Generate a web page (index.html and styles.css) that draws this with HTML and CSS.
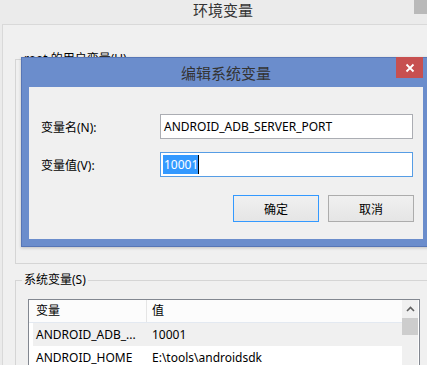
FILE: index.html
```html
<!DOCTYPE html>
<html lang="zh-CN">
<head>
  <meta charset="UTF-8">
  <title>环境变量</title>
  <link rel="stylesheet" href="styles.css">
</head>
<body>
  <div class="window">
    <div class="win-titlebar">
      <span class="win-title">环境变量</span>
      <span class="win-close"></span>
    </div>

    <div class="client">
      <fieldset class="group">
        <legend>root 的用户变量(U)</legend>
        <div class="group-user-body"></div>
      </fieldset>

      <fieldset class="group group-system">
        <legend>系统变量(S)</legend>
        <div class="listbox">
          <div class="list-main">
            <div class="list-header">
              <span class="col col-name">变量</span>
              <span class="col col-value">值</span>
            </div>
            <div class="list-row selected">
              <span class="col col-name">ANDROID_ADB_...</span>
              <span class="col col-value">10001</span>
            </div>
            <div class="list-row">
              <span class="col col-name">ANDROID_HOME</span>
              <span class="col col-value">E:\tools\androidsdk</span>
            </div>
          </div>
          <div class="scrollbar">
            <div class="scroll-up">
              <svg width="9" height="6" viewBox="0 0 9 6"><path d="M1 5 L4.5 1.5 L8 5" fill="none" stroke="#606060" stroke-width="1.6"/></svg>
            </div>
            <div class="scroll-thumb"></div>
          </div>
        </div>
      </fieldset>
    </div>

    <!-- edit dialog over the main window -->
    <div class="dialog">
      <div class="dialog-title">编辑系统变量</div>
      <div class="dialog-close">
        <svg width="10" height="10" viewBox="0 0 10 10"><path d="M1.5 1.5 L8.5 8.5 M8.5 1.5 L1.5 8.5" stroke="#fff" stroke-width="1.8"/></svg>
      </div>
      <div class="dialog-body">
        <div class="field">
          <span class="field-label">变量名(N):</span>
          <div class="field-input">ANDROID_ADB_SERVER_PORT</div>
        </div>
        <div class="field">
          <span class="field-label">变量值(V):</span>
          <div class="field-input focused"><span class="selection">10001</span><span class="caret"></span></div>
        </div>
        <div class="buttons">
          <div class="btn default">确定</div>
          <div class="btn">取消</div>
        </div>
      </div>
    </div>
  </div>
</body>
</html>
```

FILE: styles.css
```css
* {
  box-sizing: border-box;
}
html, body {
  margin: 0;
  padding: 0;
}
body {
  width: 427px;
  height: 365px;
  overflow: hidden;
  font-family: "Noto Sans", "Noto Sans CJK SC", sans-serif;
  font-size: 12px;
  color: #000;
}
.window {
  position: relative;
  width: 446px;
  height: 365px;
  background: #ebebeb;
  overflow: hidden;
}
.win-titlebar {
  height: 24px;
  display: flex;
  justify-content: center;
}
.win-title {
  font-family: "Noto Sans CJK SC", sans-serif;
  font-size: 15px;
  line-height: 20px;
  color: #333;
}
.win-close {
  position: absolute;
  left: 414px;
  top: 0;
  width: 32px;
  height: 14px;
  background: #b9b9b9;
}
.client {
  margin-left: 2px;
  height: 341px;
  border-top: 1px solid #d9d9d9;
  border-left: 1px solid #d9d9d9;
  background: #f0f0f0;
  padding: 26px 0 0 12px;
}
.group {
  margin: 0;
  padding: 0;
  min-width: 0;
  border: 1px solid #d5d5d5;
}
.group legend {
  margin-left: 6px;
  padding: 0 2px;
  line-height: 16px;
}
.group-user-body {
  height: 196px;
}
.group-system {
  margin-top: 8px;
}
.listbox {
  display: flex;
  width: 392px;
  height: 80px;
  margin: 11px 0 0 12px;
  border: 1px solid #828790;
  background: #fff;
}
.list-main {
  flex: 1;
}
.list-header {
  display: flex;
  height: 23px;
  line-height: 22px;
  background: #fcfcfc;
  border-bottom: 1px solid #e3e9f1;
}
.list-header .col-name {
  width: 118px;
  padding-left: 7px;
  border-right: 1px solid #e5e5e5;
}
.col-value {
  padding-left: 5px;
}
.list-row {
  display: flex;
  height: 23px;
  line-height: 23px;
  margin-left: 4px;
}
.list-row .col-name {
  width: 114px;
  padding-left: 3px;
}
.list-row.selected {
  background: #f0f0f0;
}
.scrollbar {
  width: 16px;
  margin-right: 1px;
  background: #f0f0f0;
}
.scroll-up {
  height: 18px;
  display: flex;
  align-items: center;
  justify-content: center;
}
.scroll-thumb {
  height: 17px;
  background: #cdcdcd;
}
.dialog {
  position: absolute;
  left: 21px;
  top: 57px;
  width: 410px;
  padding: 0 7px 7px 7px;
  background: #6b8dcc;
  border: 1px solid #5776b6;
  box-shadow: 0 1px 3px rgba(0,0,0,0.2);
}
.dialog-title {
  height: 29px;
  display: flex;
  align-items: center;
  justify-content: center;
  font-family: "Noto Sans CJK SC", sans-serif;
  font-size: 15px;
  color: #333;
}
.dialog-close {
  position: absolute;
  top: -1px;
  right: 7px;
  width: 27px;
  height: 21px;
  background: #c75050;
  display: flex;
  align-items: center;
  justify-content: center;
}
.dialog-body {
  height: 152px;
  padding: 27px 10px 0 12px;
  background: #f0f0f0;
}
.field {
  display: flex;
  align-items: center;
  height: 25px;
}
.field + .field {
  margin-top: 13px;
}
.field-label {
  width: 119px;
}
.field-input {
  display: flex;
  align-items: center;
  width: 253px;
  height: 25px;
  padding-left: 3px;
  border: 1px solid #abadb3;
  background: #fff;
}
.field-input.focused {
  padding-left: 2px;
  border-color: #569de5;
}
.selection {
  padding-left: 1px;
  line-height: 19px;
  background: #3399ff;
  color: #fff;
}
.caret {
  width: 1px;
  height: 19px;
  background: #000;
}
.buttons {
  display: flex;
  justify-content: flex-end;
  gap: 9px;
  margin-top: 18px;
  margin-right: -1px;
}
.btn {
  width: 86px;
  height: 27px;
  display: flex;
  align-items: center;
  justify-content: center;
  border: 1px solid #acacac;
  background: linear-gradient(#f0f0f0, #e5e5e5);
}
.btn.default {
  border-color: #3399ff;
}
```
